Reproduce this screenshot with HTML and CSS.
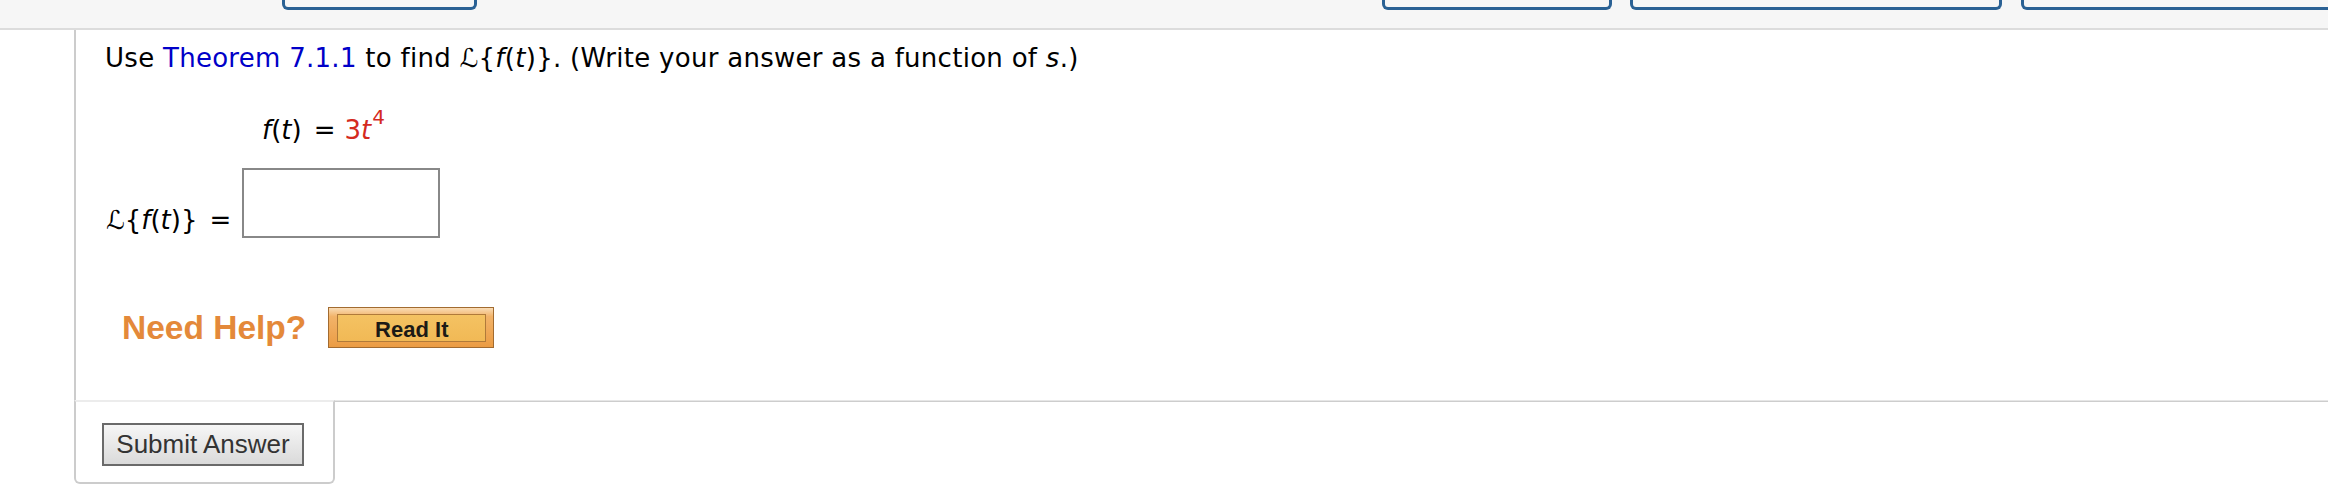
FILE: index.html
```html
<!DOCTYPE html>
<html>
<head>
<meta charset="utf-8">
<link rel="stylesheet" href="styles.css">
</head>
<body>
<div class="topbar">
  <div class="tab tab-1"></div>
  <div class="tab tab-2"></div>
  <div class="tab tab-3"></div>
  <div class="tab tab-4"></div>
</div>
<div class="question">
  <div class="card">
    <p class="prompt">Use <a class="link">Theorem 7.1.1</a> to find <span class="script">ℒ</span>{<i>f</i>(<i>t</i>)}. (Write your answer as a function of <i>s</i>.)</p>
    <p class="given"><i>f</i>(<i>t</i>)<span class="op">=</span><span class="red">3<i>t</i><sup class="exp">4</sup></span></p>
    <div class="answer-row">
      <span class="label"><span class="script">ℒ</span>{<i>f</i>(<i>t</i>)}<span class="op op-eq">=</span></span>
      <span class="answer-box"></span>
    </div>
    <div class="help-row">
      <span class="need-help">Need Help?</span>
      <span class="read-it"><span class="read-it-inner">Read It</span></span>
    </div>
  </div>
  <div class="footer">
    <div class="submit-box"><button class="submit">Submit Answer</button></div>
    <div class="footer-rest"></div>
  </div>
</div>
</body>
</html>
```
FILE: styles.css
```css
html, body {
  margin: 0;
  padding: 0;
  background: #ffffff;
}
body {
  width: 2328px;
  height: 488px;
  overflow: hidden;
  font-family: "DejaVu Sans", Verdana, sans-serif;
  color: #000;
}

.topbar {
  height: 28px;
  background: #f6f6f6;
  border-bottom: 2px solid #dcdcdc;
  display: flex;
  align-items: flex-start;
  padding-left: 282px;
  overflow: hidden;
}
.tab {
  flex: 0 0 auto;
  box-sizing: border-box;
  height: 10px;
  border: 3px solid #2a6194;
  border-top: 0;
  border-radius: 0 0 6px 6px;
  background: #f6f6f6;
}
.tab-1 { width: 195px; }
.tab-2 { width: 230px; margin-left: 905px; }
.tab-3 { width: 372px; margin-left: 18px; }
.tab-4 { width: 340px; margin-left: 19px; }

.question {
  margin-left: 74px;
}
.card {
  box-sizing: border-box;
  height: 370px;
  border-left: 2px solid #cccccc;
  padding: 13px 0 0 29px;
}
.prompt {
  margin: 0;
  font-size: 26px;
  line-height: 30px;
  letter-spacing: 0.28px;
}
.link {
  color: #0000c8;
  text-decoration: none;
}
.script {
  font-family: "DejaVu Serif", "DejaVu Sans", serif;
  font-style: italic;
}
.given {
  margin: 42px 0 0 157px;
  font-size: 26px;
  line-height: 30px;
}
.op {
  margin: 0 9px 0 12px;
}
.red {
  color: #d42a1e;
}
.exp {
  font-size: 20px;
  line-height: 0;
  vertical-align: 15px;
  margin-left: 1px;
}

.answer-row {
  display: flex;
  align-items: flex-end;
  margin-top: 23px;
}
.label {
  font-size: 26px;
  line-height: 30px;
  margin-bottom: 3px;
  padding-left: 1px;
}
.op-eq {
  margin: 0 11px 0 12px;
}
.answer-box {
  box-sizing: border-box;
  width: 198px;
  height: 70px;
  border: 2px solid #888888;
  background: #fff;
}

.help-row {
  display: flex;
  align-items: center;
  margin-top: 69px;
  padding-left: 17px;
}
.need-help {
  font-family: "Liberation Sans", Arial, sans-serif;
  font-weight: bold;
  font-size: 33.5px;
  color: #e4893a;
}
.read-it {
  box-sizing: border-box;
  display: flex;
  width: 166px;
  height: 41px;
  margin-left: 22px;
  border: 1px solid #a26b30;
  background: linear-gradient(#f9dcb6 0%, #f2b369 22%, #eb9c44 100%);
  padding: 6px 7px 5px 8px;
}
.read-it-inner {
  flex: 1;
  display: flex;
  align-items: center;
  justify-content: center;
  padding-top: 3px;
  border: 1px solid #b07a3a;
  background: linear-gradient(#f4c262, #f1b955);
  font-family: "Liberation Sans", Arial, sans-serif;
  font-weight: bold;
  font-size: 22px;
  color: #1c1a16;
}

.footer {
  display: flex;
  align-items: flex-start;
}
.submit-box {
  box-sizing: border-box;
  width: 261px;
  height: 84px;
  border: 2px solid #cccccc;
  border-top-color: #ececec;
  border-radius: 0 0 6px 6px;
  padding: 21px 0 0 26px;
}
.footer-rest {
  flex: 1;
  height: 1px;
  border-top: 1px solid #e6e6e6;
  background: #cdcdcd;
}
.submit {
  box-sizing: border-box;
  width: 202px;
  height: 43px;
  margin: 0;
  padding: 0;
  border: 2px solid #6a6a6a;
  border-radius: 0;
  background: linear-gradient(#f6f6f6, #dadada);
  font-family: "Liberation Sans", Arial, sans-serif;
  font-size: 26px;
  color: #333333;
}
```
